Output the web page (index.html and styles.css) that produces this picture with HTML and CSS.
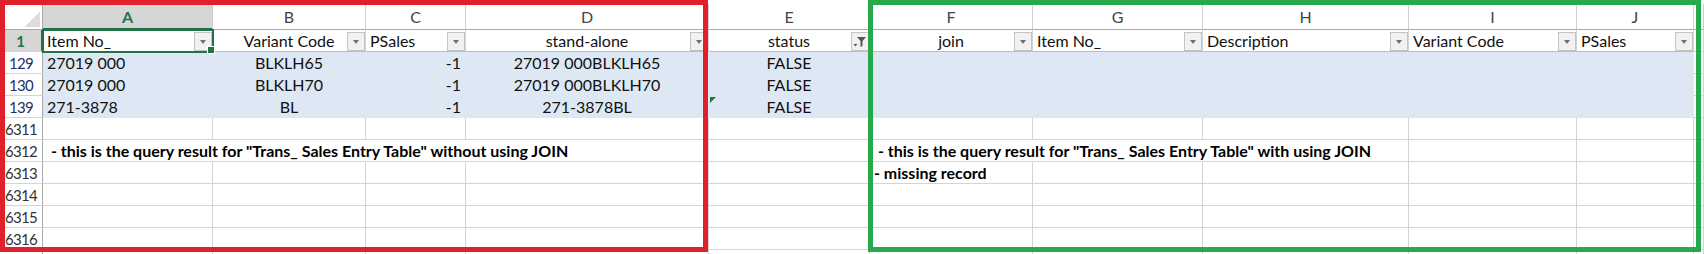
FILE: index.html
```html
<!DOCTYPE html>
<html lang="en">
<head>
<meta charset="utf-8">
<title>Sheet</title>
<link rel="stylesheet" href="styles.css">
</head>
<body>
<div class="sheet">
  <div class="row">
    <div class="corner"></div>
    <div class="ch sel">A</div>
    <div class="ch">B</div>
    <div class="ch">C</div>
    <div class="ch">D</div>
    <div class="ch">E</div>
    <div class="ch">F</div>
    <div class="ch">G</div>
    <div class="ch">H</div>
    <div class="ch">I</div>
    <div class="ch">J</div>
    <div class="ch"></div>
  </div>
  <div class="row">
    <div class="rh sel">1</div>
    <div class="c th selcell"><span class="v l">Item No_</span><span class="fb"></span></div>
    <div class="c th"><span class="v ctr">Variant Code</span><span class="fb"></span></div>
    <div class="c th"><span class="v l">PSales</span><span class="fb"></span></div>
    <div class="c th"><span class="v ctr">stand-alone</span><span class="fb"></span></div>
    <div class="c th"><span class="v ctr">status</span><span class="fb filt"><svg width="16" height="15" viewBox="0 0 16 15"><polygon points="5,3 14,3 10.5,7 10.5,12 8.5,13 8.5,7" fill="#555"/><polygon points="1.5,10 5.5,10 3.5,12.5" fill="#555"/></svg></span></div>
    <div class="c th"><span class="v ctr">join</span><span class="fb"></span></div>
    <div class="c th"><span class="v l">Item No_</span><span class="fb"></span></div>
    <div class="c th"><span class="v l">Description</span><span class="fb"></span></div>
    <div class="c th"><span class="v l">Variant Code</span><span class="fb"></span></div>
    <div class="c th"><span class="v l">PSales</span><span class="fb"></span></div>
    <div class="c"></div>
  </div>
  <div class="row">
    <div class="rh nav">129</div>
    <div class="c t"><span class="v l">27019 000</span></div>
    <div class="c t"><span class="v ctr">BLKLH65</span></div>
    <div class="c t"><span class="v r">-1</span></div>
    <div class="c t"><span class="v ctr">27019 000BLKLH65</span></div>
    <div class="c t"><span class="v ctr">FALSE</span></div>
    <div class="c t"></div>
    <div class="c t"></div>
    <div class="c t"></div>
    <div class="c t"></div>
    <div class="c t"></div>
    <div class="c"></div>
  </div>
  <div class="row">
    <div class="rh nav">130</div>
    <div class="c t"><span class="v l">27019 000</span></div>
    <div class="c t"><span class="v ctr">BLKLH70</span></div>
    <div class="c t"><span class="v r">-1</span></div>
    <div class="c t"><span class="v ctr">27019 000BLKLH70</span></div>
    <div class="c t"><span class="v ctr">FALSE</span></div>
    <div class="c t"></div>
    <div class="c t"></div>
    <div class="c t"></div>
    <div class="c t"></div>
    <div class="c t"></div>
    <div class="c"></div>
  </div>
  <div class="row">
    <div class="rh nav">139</div>
    <div class="c t"><span class="v l">271-3878</span></div>
    <div class="c t"><span class="v ctr">BL</span></div>
    <div class="c t"><span class="v r">-1</span></div>
    <div class="c t"><span class="v ctr">271-3878BL</span></div>
    <div class="c t warn"><span class="v ctr">FALSE</span></div>
    <div class="c t"></div>
    <div class="c t"></div>
    <div class="c t"></div>
    <div class="c t"></div>
    <div class="c t"></div>
    <div class="c"></div>
  </div>
  <div class="row">
    <div class="rh">6311</div>
    <div class="c"></div><div class="c"></div><div class="c"></div><div class="c"></div><div class="c"></div>
    <div class="c"></div><div class="c"></div><div class="c"></div><div class="c"></div><div class="c"></div><div class="c"></div>
  </div>
  <div class="row">
    <div class="rh">6312</div>
    <div class="c span4"><span class="v l note"> - this is the query result for "Trans_ Sales Entry Table" without using JOIN</span></div>
    <div class="c"></div>
    <div class="c span3"><span class="v l note"> - this is the query result for "Trans_ Sales Entry Table" with using JOIN</span></div>
    <div class="c"></div><div class="c"></div><div class="c"></div>
  </div>
  <div class="row">
    <div class="rh">6313</div>
    <div class="c"></div><div class="c"></div><div class="c"></div><div class="c"></div><div class="c"></div>
    <div class="c"><span class="v l note">- missing record</span></div>
    <div class="c"></div><div class="c"></div><div class="c"></div><div class="c"></div><div class="c"></div>
  </div>
  <div class="row">
    <div class="rh">6314</div>
    <div class="c"></div><div class="c"></div><div class="c"></div><div class="c"></div><div class="c"></div>
    <div class="c"></div><div class="c"></div><div class="c"></div><div class="c"></div><div class="c"></div><div class="c"></div>
  </div>
  <div class="row">
    <div class="rh">6315</div>
    <div class="c"></div><div class="c"></div><div class="c"></div><div class="c"></div><div class="c"></div>
    <div class="c"></div><div class="c"></div><div class="c"></div><div class="c"></div><div class="c"></div><div class="c"></div>
  </div>
  <div class="row">
    <div class="rh">6316</div>
    <div class="c"></div><div class="c"></div><div class="c"></div><div class="c"></div><div class="c"></div>
    <div class="c"></div><div class="c"></div><div class="c"></div><div class="c"></div><div class="c"></div><div class="c"></div>
  </div>
  <div class="row">
    <div class="rh"></div>
    <div class="c"></div><div class="c"></div><div class="c"></div><div class="c"></div><div class="c"></div>
    <div class="c"></div><div class="c"></div><div class="c"></div><div class="c"></div><div class="c"></div><div class="c"></div>
  </div>
</div>
<div class="frame red"></div>
<div class="frame green"></div>
</body>
</html>
```
FILE: styles.css
```css
* { box-sizing: border-box; }
html, body { margin: 0; padding: 0; background: #fff; }
body {
  width: 1704px;
  height: 254px;
  overflow: hidden;
  position: relative;
  font-family: Lato, "Liberation Sans", sans-serif;
  font-size: 16px;
  color: #111;
}
.sheet {
  display: grid;
  grid-template-columns: 43px 170px 153px 100px 243px 161px 163px 170px 206px 168px 117px 1fr;
  grid-template-rows: 26px;
  grid-auto-rows: 22px;
  padding-top: 4px;
  height: 254px;
  overflow: hidden;
}
.row { display: contents; }

.corner {
  border-right: 1px solid #ababab;
  border-bottom: 1px solid #ababab;
  background: linear-gradient(to top left, #dcdcdc 50%, transparent 50%) no-repeat right 2px bottom 2px / 15px 15px;
}
.ch {
  display: flex;
  align-items: center;
  justify-content: center;
  color: #444;
  font-size: 16px;
  line-height: 18px;
  padding-top: 1px;
  border-right: 1px solid #d0d0d0;
  border-bottom: 1px solid #ababab;
}
.ch.sel {
  background: #d6d6d6;
  color: #217346;
  font-weight: bold;
  border-bottom: 2px solid #217346;
}
.rh {
  display: flex;
  align-items: flex-end;
  justify-content: center;
  color: #333;
  font-size: 15px;
  letter-spacing: -0.7px;
  line-height: 18px;
  padding-bottom: 1px;
  border-right: 1px solid #ababab;
  border-bottom: 1px solid #d4d4d4;
}
.rh.nav { color: #1f2f6b; }
.rh.sel {
  background: #d6d6d6;
  color: #217346;
  font-size: 15px;
  font-weight: bold;
  letter-spacing: 0;
  border-right: 2px solid #217346;
}

.c {
  display: grid;
  min-width: 0;
  line-height: 18px;
  border-right: 1px solid #d4d4d4;
  border-bottom: 1px solid #d4d4d4;
}
.c > * { grid-area: 1 / 1; }
.v {
  align-self: end;
  padding: 0 4px 1px;
  white-space: nowrap;
}
.l { justify-self: start; }
.ctr { justify-self: center; }
.r { justify-self: end; }

.th { border-bottom-color: #bcbcbc; }
.t { background: #dde8f4; border-color: transparent; }

.fb {
  justify-self: end;
  align-self: end;
  width: 18px;
  height: 19px;
  border: 1px solid #c4c4c4;
  background: #f1f1f1;
  display: flex;
  align-items: center;
  justify-content: center;
}
.fb::after {
  content: "";
  border-left: 3.5px solid transparent;
  border-right: 3.5px solid transparent;
  border-top: 4px solid #707070;
}
.fb.filt::after { display: none; }

.selcell {
  position: relative;
  z-index: 2;
  outline: 2px solid #217346;
  outline-offset: -1px;
}
.selcell::after {
  content: "";
  position: absolute;
  right: -3px;
  bottom: -3px;
  width: 6px;
  height: 6px;
  background: #217346;
  border: 1px solid #fff;
}
.warn { position: relative; }
.warn::before {
  content: "";
  position: absolute;
  left: 1px;
  top: 1px;
  border-top: 6px solid #1d7a35;
  border-right: 6px solid transparent;
}

.note { font-weight: bold; white-space: pre; color: #000; }
.span4 { grid-column: span 4; }
.span3 { grid-column: span 3; }

.frame {
  position: absolute;
  top: 0;
  height: 252px;
  border: 5px solid;
  pointer-events: none;
}
.frame.red { left: 0; width: 708px; border-color: #e0202a; }
.frame.green { left: 868px; width: 833px; border-color: #27a84a; }
```
